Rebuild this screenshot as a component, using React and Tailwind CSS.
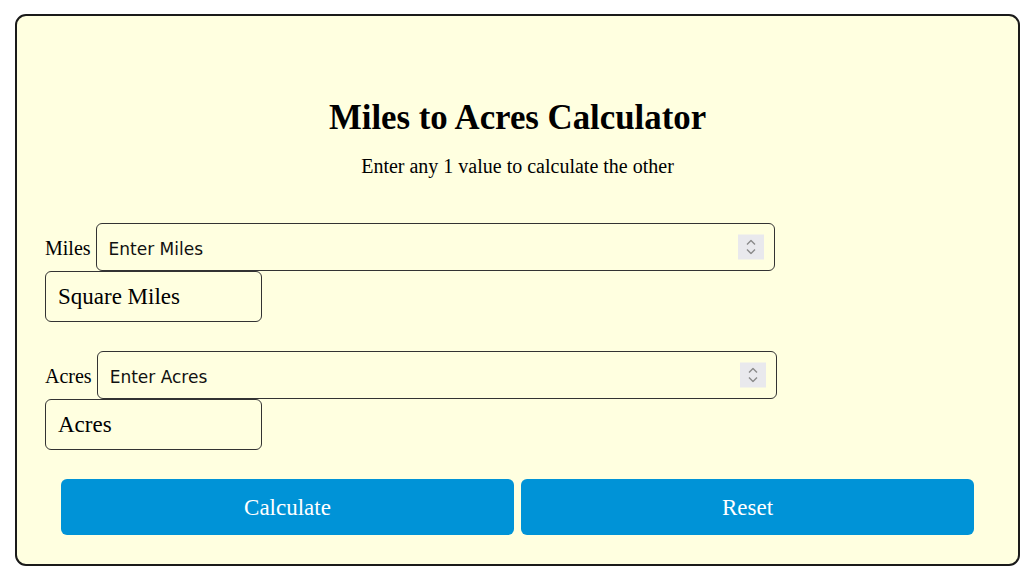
import React from "react";

const SpinBox = () => (
  <div className="absolute right-[11px] top-1/2 -translate-y-1/2 w-[26px] h-[25px] bg-[#e9e9ed] flex flex-col items-center justify-center gap-[3px]">
    <svg width="10" height="6" viewBox="0 0 10 6" fill="none">
      <path d="M1 5 L5 1 L9 5" stroke="#8a8a8a" strokeWidth="1.4" />
    </svg>
    <svg width="10" height="6" viewBox="0 0 10 6" fill="none">
      <path d="M1 1 L5 5 L9 1" stroke="#8a8a8a" strokeWidth="1.4" />
    </svg>
  </div>
);

const Field = ({ label, placeholder, unit, width }) => (
  <div>
    <div className="flex items-center">
      <label className="text-[20px] leading-[23px] mr-[5px] pt-[2px]">{label}</label>
      <div className={`relative ${width}`}>
        <input
          type="text"
          placeholder={placeholder}
          className="w-full h-[48px] border border-[#333] rounded-[6px] bg-transparent pl-[12px] pt-[3px] text-[17px] placeholder:text-[#111] outline-none"
          style={{ fontFamily: '"DejaVu Sans", sans-serif' }}
        />
        <SpinBox />
      </div>
    </div>
    <div className="w-[217px] h-[51px] border border-[#333] rounded-[6px] flex items-center pl-[12px] pt-[2px] text-[23px]">
      {unit}
    </div>
  </div>
);

const App = () => {
  return (
    <div
      className="w-[1024px] h-[576px] bg-white pl-[15px] pt-[14px] text-black"
      style={{ fontFamily: '"Liberation Serif", "Times New Roman", serif' }}
    >
      <div className="w-[1005px] h-[552px] border-2 border-[#1a1a1a] rounded-[11px] bg-[#ffffe0] pt-[82px] px-[28px]">
        <h1 className="text-[34.8px] leading-[40px] font-bold text-center">
          Miles to Acres Calculator
        </h1>
        <p className="mt-[16px] text-[20px] leading-[24px] text-center">
          Enter any 1 value to calculate the other
        </p>

        <div className="mt-[45px]">
          <Field label="Miles" placeholder="Enter Miles" unit="Square Miles" width="w-[679px]" />
        </div>

        <div className="mt-[29px]">
          <Field label="Acres" placeholder="Enter Acres" unit="Acres" width="w-[680px]" />
        </div>

        <div className="mt-[29px] px-[16px] flex gap-[7px]">
          <button className="flex-1 h-[56px] rounded-[6px] bg-[#0093d7] text-white text-[23px] pt-[2px]">
            Calculate
          </button>
          <button className="flex-1 h-[56px] rounded-[6px] bg-[#0093d7] text-white text-[23px] pt-[2px]">
            Reset
          </button>
        </div>
      </div>
    </div>
  );
};

export default App;
